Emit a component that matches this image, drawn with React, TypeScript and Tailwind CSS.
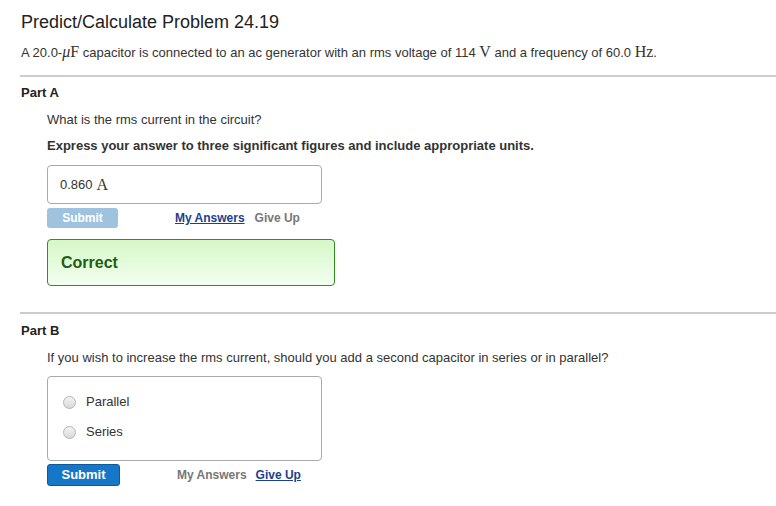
import React from "react";

const sans = "font-['Liberation_Sans',Arial,sans-serif]";
const serif = "font-['Liberation_Serif','Times_New_Roman',serif]";

function Radio({ label }: { label: string }) {
  return (
    <label className="flex items-center h-[30px]">
      <span className="w-[13px] h-[13px] rounded-full border border-[#b4b4b4] bg-gradient-to-b from-[#f4f4f4] to-[#d9d9d9] ml-[15px]" />
      <span className="ml-[10px] text-[13px] text-[#333]">{label}</span>
    </label>
  );
}

export default function App() {
  return (
    <div className={`${sans} w-[776px] h-[506px] bg-white text-[#333] overflow-hidden`}>
      <div className="pl-[21px] pt-[10px]">
        <h1 className="text-[18px] leading-[24px] text-[#222]">Predict/Calculate Problem 24.19</h1>
        <p className="mt-[9px] text-[13px] leading-[18px]">
          A 20.0-<span className={`${serif} text-[16px] italic`}>μ</span>
          <span className={`${serif} text-[16px]`}>F</span> capacitor is connected to an ac generator with an rms
          voltage of 114 <span className={`${serif} text-[16px]`}>V</span> and a frequency of 60.0{" "}
          <span className={`${serif} text-[16px]`}>Hz</span>.
        </p>
      </div>

      <div className="ml-[20px] mt-[13px] h-[2px] bg-[#cccccc]" />

      {/* Part A */}
      <div className="pl-[21px] pt-[7px]">
        <h2 className="text-[13px] font-bold leading-[18px] text-[#222]">Part A</h2>
        <div className="pl-[26px]">
          <p className="mt-[9px] text-[13px] leading-[18px]">What is the rms current in the circuit?</p>
          <p className="mt-[8px] text-[13px] font-bold leading-[18px]">
            Express your answer to three significant figures and include appropriate units.
          </p>
          <div className="mt-[10px] w-[275px] h-[39px] border border-[#aaaaaa] rounded-[4px] flex items-center pl-[12px] text-[13px]">
            0.860 <span className={`${serif} text-[16px] ml-[4px]`}>A</span>
          </div>
          <div className="mt-[4px] flex items-center">
            <button className="w-[71px] h-[20px] rounded-[3px] bg-[#9fc3de] text-white text-[12px] font-bold">
              Submit
            </button>
            <a className="ml-[57px] text-[12px] font-bold text-[#1d3f8f] underline">My Answers</a>
            <span className="ml-[10px] text-[12px] font-bold text-[#777]">Give Up</span>
          </div>
          <div className="mt-[11px] w-[288px] h-[47px] rounded-[4px] border border-[#2e8f1e] bg-gradient-to-b from-[#d6f7c6] to-[#f2fff0] flex items-center pl-[13px]">
            <span className="text-[16px] font-bold text-[#1d5e12]">Correct</span>
          </div>
        </div>
      </div>

      <div className="ml-[20px] mt-[26px] h-[2px] bg-[#cccccc]" />

      {/* Part B */}
      <div className="pl-[21px] pt-[8px]">
        <h2 className="text-[13px] font-bold leading-[18px] text-[#222]">Part B</h2>
        <div className="pl-[26px]">
          <p className="mt-[9px] text-[13px] leading-[18px]">
            If you wish to increase the rms current, should you add a second capacitor in series or in parallel?
          </p>
          <div className="mt-[9px] w-[275px] h-[85px] border border-[#aaaaaa] rounded-[4px] pt-[10px]">
            <Radio label="Parallel" />
            <Radio label="Series" />
          </div>
          <div className="mt-[3px] flex items-center">
            <button className="w-[73px] h-[22px] rounded-[3px] bg-[#1677c9] border border-[#10599a] text-white text-[13px] font-bold">
              Submit
            </button>
            <span className="ml-[57px] text-[12px] font-bold text-[#777]">My Answers</span>
            <a className="ml-[9px] text-[12px] font-bold text-[#1d3f8f] underline">Give Up</a>
          </div>
        </div>
      </div>
    </div>
  );
}
